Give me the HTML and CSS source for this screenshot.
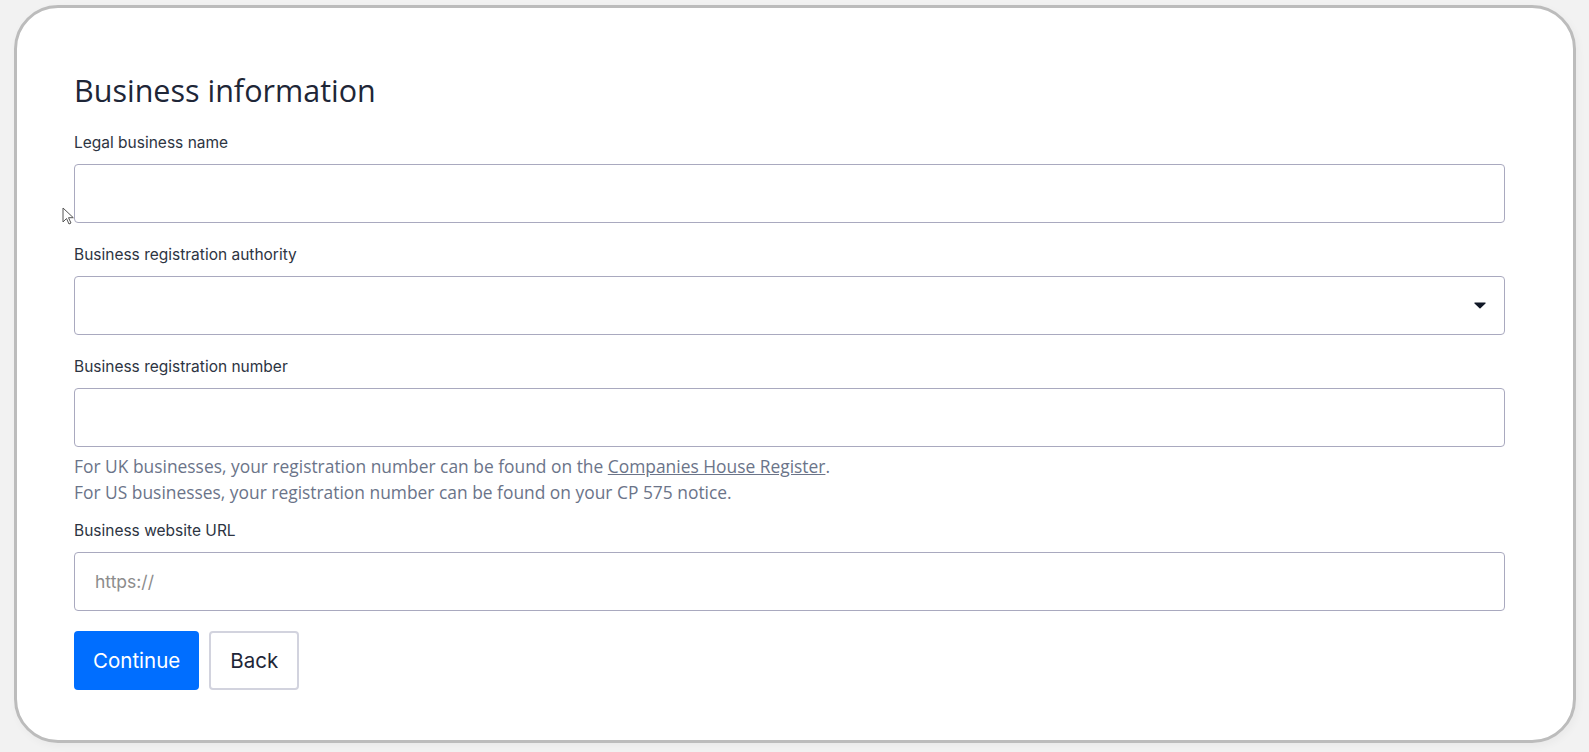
FILE: index.html
```html
<!DOCTYPE html>
<html lang="en">
<head>
    <meta charset="UTF-8">
    <meta name="viewport" content="width=device-width, initial-scale=1.0">
    <title>Business information</title>
    <link rel="stylesheet" href="styles.css">
</head>
<body>
    <div class="card">
        <h1>Business information</h1>

        <label for="legalName">Legal business name</label>
        <input type="text" id="legalName">

        <label for="authority">Business registration authority</label>
        <div class="select-wrap">
            <select id="authority">
                <option value=""></option>
            </select>
            <svg class="select-arrow" width="12" height="7" viewBox="0 0 12 7">
                <path d="M1 0.5h10c0.6 0 0.9 0.7 0.5 1.1l-5 4.6c-0.3 0.3-0.7 0.3-1 0l-5-4.6C0.1 1.2 0.4 0.5 1 0.5z" fill="#111827"/>
            </svg>
        </div>

        <label for="regNumber">Business registration number</label>
        <input type="text" id="regNumber">
        <p class="hint">
            For UK businesses, your registration number can be found on the <a href="#">Companies House Register</a>.<br>
            For US businesses, your registration number can be found on your CP 575 notice.
        </p>

        <label for="website">Business website URL</label>
        <input type="text" id="website" placeholder="https://">

        <div class="actions">
            <button class="btn-primary">Continue</button>
            <button class="btn-secondary">Back</button>
        </div>
    </div>

    <svg class="cursor" width="12" height="18" viewBox="0 0 12 18">
        <path d="M1 1v14l3.5-3.5 2.5 5.5 2-1-2.5-5.3h4.8z" fill="#fff" stroke="#555" stroke-width="1"/>
    </svg>
</body>
</html>
```

FILE: styles.css
```css
body {
    margin: 0;
    padding: 5px 13px 9px 14px;
    background-color: #f2f2f2;
    font-family: Inter, "Open Sans", sans-serif;
}

.card {
    background-color: #ffffff;
    border: 3px solid #bcbcbc;
    border-radius: 44px;
    padding: 62px 68px 50px 57px;
    display: flex;
    flex-direction: column;
    box-shadow: 2px 3px 8px rgba(0, 0, 0, 0.04);
}

h1 {
    font-family: "Open Sans", sans-serif;
    font-weight: 400;
    font-size: 30.5px;
    line-height: 40px;
    color: #1e2637;
    margin: 0 0 23px 0;
}

label {
    font-size: 15.5px;
    line-height: 20px;
    color: #2d3442;
    margin-bottom: 11px;
}

input, select {
    box-sizing: border-box;
    width: 100%;
    height: 59px;
    border: 1px solid #a9a9bf;
    border-radius: 4px;
    padding: 0 20px;
    font-family: Inter, sans-serif;
    font-size: 17.5px;
    color: #1e2637;
    background-color: #ffffff;
    outline: none;
    margin: 0 0 22px 0;
}

input::placeholder {
    color: #8c8c8c;
}

select {
    appearance: none;
    -webkit-appearance: none;
}

.select-wrap {
    position: relative;
}

.select-arrow {
    position: absolute;
    right: 19px;
    top: 26px;
}

.hint {
    font-family: "Open Sans", sans-serif;
    font-size: 17.4px;
    line-height: 26px;
    color: #6b7489;
    margin: -16px 0 16px 0;
}

.hint a {
    color: #6b7489;
}

.actions {
    display: flex;
    gap: 10px;
    margin-top: -2px;
}

.actions button {
    height: 59px;
    border-radius: 4px;
    font-family: Inter, sans-serif;
    font-size: 20.5px;
    cursor: pointer;
}

.btn-primary {
    background-color: #006eff;
    color: #ffffff;
    border: none;
    padding: 0 19px;
}

.btn-secondary {
    background-color: #ffffff;
    color: #1e2637;
    border: 2px solid #d2d3de;
    padding: 0 19px;
}

.cursor {
    position: absolute;
    left: 62px;
    top: 207px;
}
```
